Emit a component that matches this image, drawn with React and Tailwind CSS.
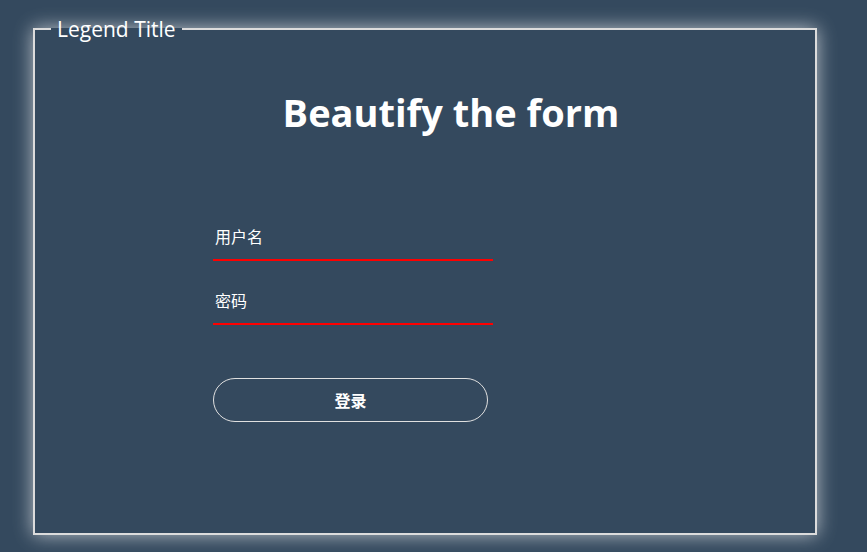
export default function App() {
  return (
    <div className="w-[867px] h-[552px] bg-[#34495e] overflow-hidden pt-[17px] pl-[33px] font-['Open_Sans',sans-serif] text-white">
      <fieldset className="w-[784px] h-[518px] border-2 border-[#dcdcdc] px-4 shadow-[0_0_18px_rgba(255,255,255,0.65)]">
        <legend className="px-[6px] text-[21px] leading-[24px]">Legend Title</legend>
        <h1 className="mt-[47px] pl-[52px] text-center text-[38px] leading-[48px] font-bold">Beautify the form</h1>
        <form className="mt-[81px] pl-[162px] flex flex-col font-['Noto_Sans_CJK_SC',sans-serif]">
          <input
            placeholder="用户名"
            className="w-[280px] h-[44px] px-[2px] pb-1 bg-transparent border-b-2 border-[#ff0000] text-[16px] text-white placeholder:text-white outline-none"
          />
          <input
            type="password"
            placeholder="密码"
            className="mt-[20px] w-[280px] h-[44px] px-[2px] pb-1 bg-transparent border-b-2 border-[#ff0000] text-[16px] text-white placeholder:text-white outline-none"
          />
          <button
            type="button"
            className="mt-[53px] w-[275px] h-[44px] rounded-full border border-[#e0e0e0] bg-transparent text-[16px] font-bold text-white"
          >
            登录
          </button>
        </form>
      </fieldset>
    </div>
  );
}
